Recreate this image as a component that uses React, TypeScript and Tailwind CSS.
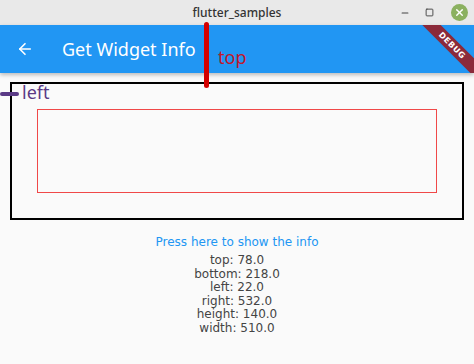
import { ArrowLeft, Minus, Square, X } from 'lucide-react'

export default function App() {
  return (
    <div className="relative w-[474px] h-[364px] overflow-hidden bg-[#fafafa] font-['Noto_Sans',sans-serif]">
      {/* window title bar */}
      <div className="h-[25px] bg-[#e9e9e9] flex items-center justify-center relative">
        <span className="text-[12px] font-medium text-[#333]">flutter_samples</span>
        <div className="absolute right-[6px] top-0 h-full flex items-center gap-[15px]">
          <Minus size={10} strokeWidth={2.5} className="text-[#444]" />
          <Square size={9} strokeWidth={2.5} className="text-[#444] mr-[2px]" />
          <div className="w-[17px] h-[17px] rounded-full bg-[#8bb160] flex items-center justify-center">
            <X size={11} strokeWidth={3} className="text-white" />
          </div>
        </div>
      </div>

      {/* app bar */}
      <div className="h-[48px] bg-[#2196f3] flex items-center shadow-[0_2px_4px_rgba(0,0,0,0.25)] relative z-10 overflow-hidden">
        <ArrowLeft size={18} strokeWidth={2.2} className="text-white ml-[16px]" />
        <span className="ml-[28px] text-[18px] text-white">Get Widget Info</span>
        <div className="absolute right-[-28px] top-[14px] w-[100px] h-[13px] bg-[#8b2a3a] rotate-45 flex items-center justify-center">
          <span className="text-[8px] font-bold text-white tracking-[0.5px] leading-none font-['DejaVu_Sans',sans-serif]">DEBUG</span>
        </div>
      </div>

      {/* body */}
      <div className="px-[10px] pt-[9px]">
        <div className="h-[138px] border-2 border-black pt-[25px] px-[25px]">
          <div className="h-[84px] border border-[#f04848]" />
        </div>
        <div className="mt-[14px] flex flex-col items-center text-[12px] font-['DejaVu_Sans',sans-serif]">
          <span className="text-[#2196f3] leading-[16px]">Press here to show the info</span>
          <div className="flex flex-col items-center text-[#444] leading-[13.6px] mt-[4px]">
            <span>top: 78.0</span>
            <span>bottom: 218.0</span>
            <span>left: 22.0</span>
            <span>right: 532.0</span>
            <span>height: 140.0</span>
            <span>width: 510.0</span>
          </div>
        </div>
      </div>

      {/* annotations */}
      <div className="absolute left-[204px] top-[22px] w-[5px] h-[66px] rounded-full bg-[#d40000] z-20" />
      <span className="absolute left-[218px] top-[48px] text-[18px] leading-none text-[#c0172b] z-20">top</span>
      <div className="absolute left-0 top-[92px] w-[19px] h-[4px] rounded-full bg-[#5a3a86] z-20" />
      <span className="absolute left-[22px] top-[83px] text-[18px] leading-none text-[#5a3a86] z-20">left</span>
    </div>
  )
}
